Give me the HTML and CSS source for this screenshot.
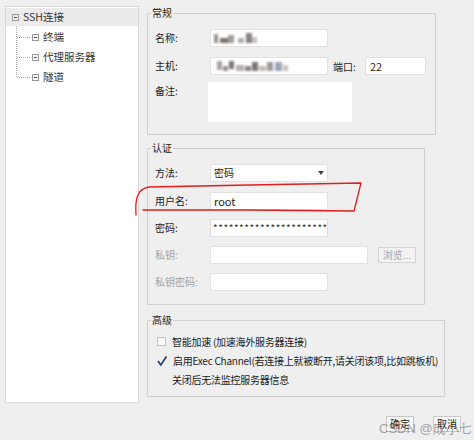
FILE: index.html
```html
<!DOCTYPE html>
<html lang="zh-CN">
<head>
<meta charset="utf-8">
<title>会话属性</title>
<link rel="stylesheet" href="styles.css">
</head>
<body>
<div class="dialog">
  <div class="main">
    <div class="tree">
      <div class="node root"><span class="toggle"></span>SSH连接</div>
      <ul class="children">
        <li class="node child"><span class="toggle"></span>终端</li>
        <li class="node child"><span class="toggle"></span>代理服务器</li>
        <li class="node child"><span class="toggle"></span>隧道</li>
      </ul>
    </div>

    <div class="panels">
      <fieldset class="group general">
        <legend>常规</legend>
        <div class="row r1">
          <label class="lbl">名称:</label>
          <div class="field w118">
            <svg class="mosaic" width="60" height="18" viewBox="0 0 60 18">
              <g filter="url(#soft)">
                <rect x="3" y="4" width="4" height="9" fill="#9a9494"/>
                <rect x="9" y="8" width="8" height="5" fill="#7d7570"/>
                <rect x="17" y="5" width="6" height="8" fill="#a39c9a"/>
                <rect x="27" y="8" width="6" height="5" fill="#b2acaa"/>
                <rect x="35" y="3" width="6" height="10" fill="#8c8080"/>
                <rect x="41" y="7" width="5" height="6" fill="#c8c0c0"/>
              </g>
            </svg>
          </div>
        </div>
        <div class="row r2">
          <label class="lbl">主机:</label>
          <div class="field w118">
            <svg class="mosaic" width="84" height="18" viewBox="0 0 84 18">
              <g filter="url(#soft)">
                <rect x="6" y="3" width="5" height="9" fill="#aaa2a2"/>
                <rect x="12" y="8" width="5" height="5" fill="#9b9090"/>
                <rect x="18" y="3" width="5" height="8" fill="#7c7474"/>
                <rect x="25" y="7" width="8" height="6" fill="#b4aeb0"/>
                <rect x="34" y="8" width="6" height="5" fill="#8a8282"/>
                <rect x="41" y="4" width="6" height="9" fill="#7e7676"/>
                <rect x="48" y="8" width="7" height="5" fill="#c4b8b8"/>
                <rect x="56" y="4" width="6" height="9" fill="#a09898"/>
                <rect x="64" y="4" width="7" height="9" fill="#9aa6b8"/>
                <rect x="72" y="7" width="5" height="6" fill="#c8c0c0"/>
              </g>
            </svg>
          </div>
          <label class="lbl-port">端口:</label>
          <div class="field port">22</div>
        </div>
        <div class="row r3">
          <label class="lbl top">备注:</label>
          <div class="field note"></div>
        </div>
      </fieldset>

      <fieldset class="group auth">
        <legend>认证</legend>
        <div class="row a1">
          <label class="lbl">方法:</label>
          <div class="field w118 select">密码<span class="arrow"></span></div>
        </div>
        <div class="row a2">
          <label class="lbl">用户名:</label>
          <div class="field w118 value">root</div>
        </div>
        <div class="row a3">
          <label class="lbl">密码:</label>
          <div class="field w118 stars">**********************</div>
        </div>
        <div class="row a3">
          <label class="lbl disabled">私钥:</label>
          <div class="field w158"></div>
          <button class="browse" disabled>浏览...</button>
        </div>
        <div class="row a3">
          <label class="lbl disabled">私钥密码:</label>
          <div class="field w118"></div>
        </div>
      </fieldset>

      <fieldset class="group advanced">
        <legend>高级</legend>
        <div class="check-row first">
          <span class="box"></span>
          <span>智能加速 (加速海外服务器连接)</span>
        </div>
        <div class="check-row">
          <svg class="tick" width="10" height="10" viewBox="0 0 10 10">
            <polyline points="1,5 3.8,9 9.5,0.5" fill="none" stroke="#243f73" stroke-width="1.7"/>
          </svg>
          <span>启用Exec Channel(若连接上就被断开,请关闭该项,比如跳板机)</span>
        </div>
        <div class="check-row note-row">关闭后无法监控服务器信息</div>
      </fieldset>
    </div>
  </div>

  <div class="footer">
    <button class="btn">确定</button>
    <button class="btn">取消</button>
  </div>
</div>

<div class="watermark">CSDN @成小七</div>

<svg class="markup" width="474" height="440" viewBox="0 0 474 440">
  <defs>
    <filter id="soft" x="-20%" y="-20%" width="140%" height="140%">
      <feGaussianBlur stdDeviation="0.8"/>
    </filter>
  </defs>
  <path d="M136,215 C135,199 137,189 149,187 L250,185 L361,183 L354,211 L250,210 L143,210"
        fill="none" stroke="#e11d1d" stroke-width="1.3" stroke-linecap="round" stroke-linejoin="round"/>
</svg>
</body>
</html>
```

FILE: styles.css
```css
html, body {
  margin: 0;
  width: 474px;
  height: 440px;
  overflow: hidden;
}

body {
  position: relative;
  background: #efefef;
  font-family: "Noto Sans CJK SC", "Microsoft YaHei", sans-serif;
  font-size: 10px;
  color: #222;
}

.dialog {
  display: flex;
  flex-direction: column;
  padding: 6px 0 0 5px;
}

.main {
  display: flex;
  align-items: flex-start;
}

/* ---------- navigation tree ---------- */
.tree {
  box-sizing: border-box;
  width: 134px;
  height: 397px;
  background: #fff;
  border: 1px solid #d8d8d8;
  padding-top: 1px;
}

.node {
  display: flex;
  align-items: center;
  line-height: 14px;
  color: #333;
}

.root {
  height: 18px;
  padding-left: 6px;
  background: #ebebeb;
  font-size: 10.5px;
}

.toggle {
  position: relative;
  box-sizing: border-box;
  width: 7px;
  height: 7px;
  border: 1px solid #9a9a9a;
  margin-right: 4px;
  flex: none;
}

.toggle::after {
  content: "";
  position: absolute;
  left: 1px;
  top: 2px;
  width: 3px;
  height: 1px;
  background: #555;
}

.children {
  position: relative;
  list-style: none;
  margin: 1px 0 0;
  padding: 0;
}

.children::before {
  content: "";
  position: absolute;
  left: 10px;
  top: -1px;
  height: 51px;
  border-left: 1px dotted #a8a8a8;
}

.child {
  position: relative;
  height: 20px;
  padding-left: 26px;
  font-size: 10.5px;
}

.child::before {
  content: "";
  position: absolute;
  left: 11px;
  top: 10px;
  width: 13px;
  border-top: 1px dotted #a8a8a8;
}

/* ---------- group boxes ---------- */
.panels {
  display: flex;
  flex-direction: column;
  margin-left: 8px;
}

.group {
  margin: 0;
  padding: 0 0 0 3px;
  border: 1px solid #d0d0d0;
  min-width: 0;
}

.group legend {
  padding: 0 1px;
  line-height: 14px;
  font-size: 10px;
  color: #222;
}

.general { width: 289px; box-sizing: border-box; padding-bottom: 12px; }
.auth { width: 278px; box-sizing: border-box; margin-top: 6px; padding-bottom: 13px; }
.advanced { width: 298px; box-sizing: border-box; margin-top: 8px; padding-bottom: 7px; }

.row {
  display: flex;
  align-items: center;
  padding-left: 4px;
  height: 18px;
}

.r1 { margin-top: 9px; }
.r2 { margin-top: 10px; }
.r3 { margin-top: 7px; height: 40px; align-items: flex-start; }
.a1 { margin-top: 9px; }
.a2 { margin-top: 10px; }
.a3 { margin-top: 9px; }

.lbl {
  width: 55px;
  flex: none;
  line-height: 14px;
}

.lbl.top { margin-top: 2px; }
.lbl.disabled { color: #a3a3a3; }

.lbl-port {
  width: 32px;
  margin-left: 5px;
  flex: none;
}

.field {
  position: relative;
  box-sizing: border-box;
  height: 18px;
  background: #fff;
  border: 1px solid #e1e1e1;
  padding-left: 3px;
  line-height: 16px;
  font-size: 10px;
  overflow: hidden;
  white-space: nowrap;
}

.w118 { width: 118px; }
.w158 { width: 158px; }
.port { width: 61px; font-size: 11px; padding-left: 4px; }
.note { width: 144px; height: 40px; border-color: #fff; margin-left: -2px; }

.value { font-size: 11px; }

.stars {
  padding-left: 2px;
  font-size: 10px;
  letter-spacing: 0.55px;
  color: #333;
}

.select .arrow {
  position: absolute;
  right: 3px;
  top: 6px;
  border-left: 3px solid transparent;
  border-right: 3px solid transparent;
  border-top: 4px solid #444;
}

.mosaic {
  display: block;
  position: absolute;
  left: 0;
  top: 0;
}

.browse {
  box-sizing: border-box;
  margin-left: 10px;
  width: 38px;
  height: 16px;
  padding: 0;
  background: #f3f3f3;
  border: 1px solid #d3d3d3;
  color: #a3a3a3;
  font-family: inherit;
  font-size: 10px;
  line-height: 14px;
}

/* ---------- advanced options ---------- */
.check-row {
  display: flex;
  align-items: center;
  height: 19px;
  padding-left: 6px;
  white-space: nowrap;
  letter-spacing: -0.25px;
}

.check-row.first { margin-top: 5px; }
.check-row.note-row { padding-left: 21px; }

.box {
  box-sizing: border-box;
  width: 9px;
  height: 9px;
  border: 1px solid #c4c4c4;
  background: #fafafa;
  margin-right: 6px;
  flex: none;
}

.tick {
  flex: none;
  margin-right: 6px;
}

/* ---------- dialog buttons ---------- */
.footer {
  display: flex;
  justify-content: flex-end;
  gap: 19px;
  margin-top: 13px;
  padding-right: 13px;
}

.btn {
  box-sizing: border-box;
  width: 28px;
  height: 16px;
  padding: 0;
  background: #f7f7f7;
  border: 1px solid #c8c8c8;
  font-family: inherit;
  font-size: 10px;
  line-height: 14px;
  color: #222;
}

.watermark {
  position: absolute;
  left: 379px;
  top: 418px;
  font-family: "Liberation Sans", "Noto Sans CJK SC", sans-serif;
  font-size: 13px;
  color: rgba(105, 105, 105, 0.6);
  white-space: nowrap;
  pointer-events: none;
}

.markup {
  position: absolute;
  left: 0;
  top: 0;
  pointer-events: none;
}
```
